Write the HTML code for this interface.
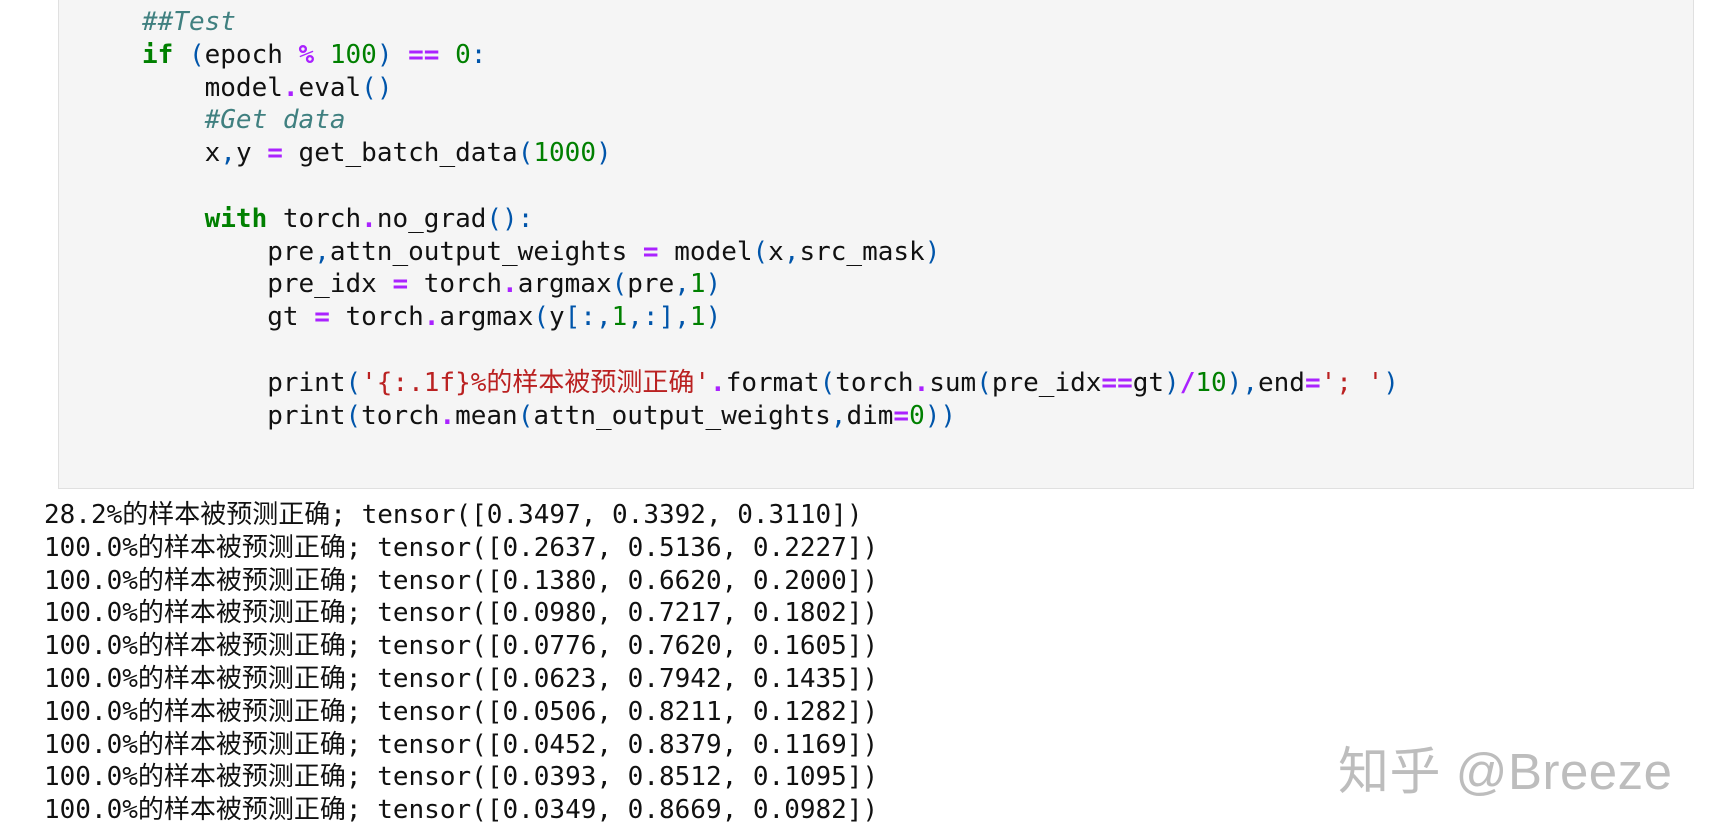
<!DOCTYPE html>
<html><head><meta charset="utf-8"><style>
body{margin:0;width:1716px;height:836px;background:#fff;overflow:hidden;position:relative;font-family:"DejaVu Sans Mono","Noto Sans CJK SC",monospace;font-size:26px;color:#111}
.cell{position:absolute;left:58px;top:-2px;width:1636px;height:491px;background:#f5f5f5;border:1px solid #e0e0e0;box-sizing:border-box}
pre{margin:0;font:inherit;line-height:32.8px;position:absolute;white-space:pre}
.k{color:#008000;font-weight:bold}.n{color:#008000}.o{color:#aa22ff;font-weight:bold}.p{color:#0055aa}.c{color:#408080;font-style:italic}.s{color:#ba2121}
.wm{position:absolute;left:1338px;top:730px;font-family:"Liberation Sans","Noto Sans CJK SC",sans-serif;font-size:51px;color:#bdbdbd;letter-spacing:0.5px}
</style></head><body>
<div class="cell"></div>
<pre style="left:142px;top:6px">
<span class="c">##Test</span>
<span class="k">if</span> <span class="p">(</span>epoch <span class="o">%</span> <span class="n">100</span><span class="p">)</span> <span class="o">==</span> <span class="n">0</span><span class="p">:</span>
    model<span class="o">.</span>eval<span class="p">()</span>
    <span class="c">#Get data</span>
    x<span class="p">,</span>y <span class="o">=</span> get_batch_data<span class="p">(</span><span class="n">1000</span><span class="p">)</span>

    <span class="k">with</span> torch<span class="o">.</span>no_grad<span class="p">():</span>
        pre<span class="p">,</span>attn_output_weights <span class="o">=</span> model<span class="p">(</span>x<span class="p">,</span>src_mask<span class="p">)</span>
        pre_idx <span class="o">=</span> torch<span class="o">.</span>argmax<span class="p">(</span>pre<span class="p">,</span><span class="n">1</span><span class="p">)</span>
        gt <span class="o">=</span> torch<span class="o">.</span>argmax<span class="p">(</span>y<span class="p">[:,</span><span class="n">1</span><span class="p">,:],</span><span class="n">1</span><span class="p">)</span>

        print<span class="p">(</span><span class="s">'{:.1f}%的样本被预测正确'</span><span class="o">.</span>format<span class="p">(</span>torch<span class="o">.</span>sum<span class="p">(</span>pre_idx<span class="o">==</span>gt<span class="p">)</span><span class="o">/</span><span class="n">10</span><span class="p">),</span>end<span class="o">=</span><span class="s">'; '</span><span class="p">)</span>
        print<span class="p">(</span>torch<span class="o">.</span>mean<span class="p">(</span>attn_output_weights<span class="p">,</span>dim<span class="o">=</span><span class="n">0</span><span class="p">))</span></pre>
<pre style="left:44px;top:499px">28.2%的样本被预测正确; tensor([0.3497, 0.3392, 0.3110])
100.0%的样本被预测正确; tensor([0.2637, 0.5136, 0.2227])
100.0%的样本被预测正确; tensor([0.1380, 0.6620, 0.2000])
100.0%的样本被预测正确; tensor([0.0980, 0.7217, 0.1802])
100.0%的样本被预测正确; tensor([0.0776, 0.7620, 0.1605])
100.0%的样本被预测正确; tensor([0.0623, 0.7942, 0.1435])
100.0%的样本被预测正确; tensor([0.0506, 0.8211, 0.1282])
100.0%的样本被预测正确; tensor([0.0452, 0.8379, 0.1169])
100.0%的样本被预测正确; tensor([0.0393, 0.8512, 0.1095])
100.0%的样本被预测正确; tensor([0.0349, 0.8669, 0.0982])</pre>
<div class="wm">知乎 @Breeze</div>
</body></html>
